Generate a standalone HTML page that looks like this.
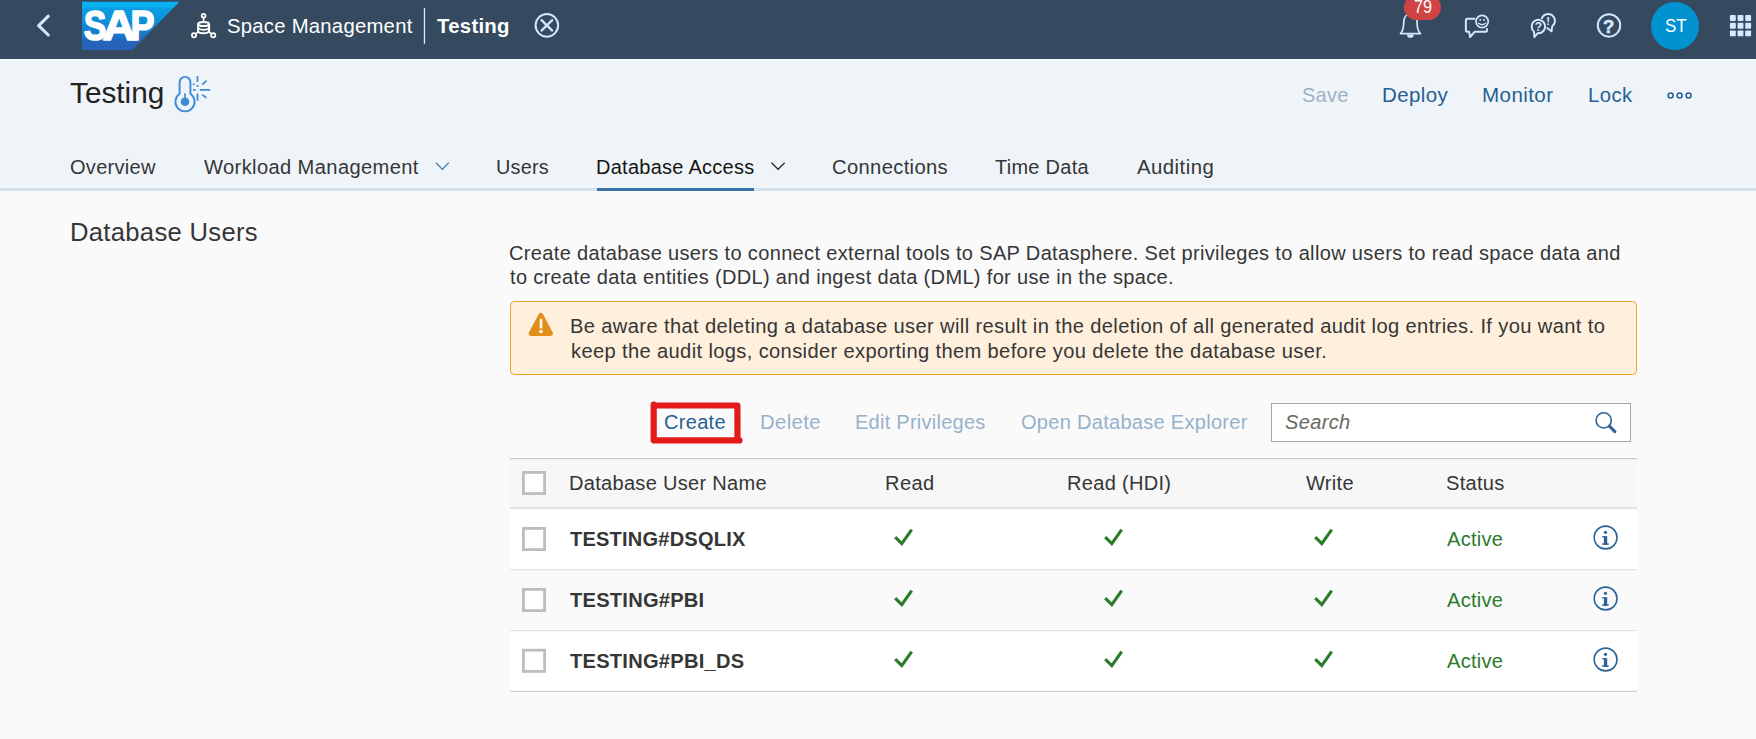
<!DOCTYPE html>
<html><head><meta charset="utf-8"><title>Space Management - Testing</title>
<style>
html,body{margin:0;padding:0;}
body{width:1756px;height:739px;overflow:hidden;background:#fafafa;position:relative;font-family:"Liberation Sans",sans-serif;}
.t{position:absolute;white-space:pre;transform-origin:0 0;font-family:"Liberation Sans",sans-serif;}
.b{position:absolute;box-sizing:border-box;}
#shell{left:0;top:0;width:1756px;height:59px;background:#354a5f;}
#phead{left:0;top:59px;width:1756px;height:129px;background:#eff4f9;}
#pline{left:0;top:188px;width:1756px;height:3px;background:#d3e0ee;}
#tabsel{left:597px;top:188px;width:157px;height:3px;background:#3873a7;}
#warn{left:510px;top:301px;width:1127px;height:74px;background:#fef0dc;border:1px solid #f2a13a;border-radius:4.5px;}
#srch{left:1271px;top:403px;width:360px;height:39px;background:#fff;border:1px solid #a9a69e;}
#thead{left:510px;top:458px;width:1127px;height:51px;background:#f7f7f7;}
.row{left:510px;width:1127px;background:#fff;}
#row1{top:509px;height:61px;}
#row2{top:570px;height:61px;background:#fafafa;}
#row3{top:631px;height:61px;}
.cb{left:522px;width:24px;height:24px;background:#fff;border:2.8px solid #bebdb7;}
svg{position:absolute;left:0;top:0;}
</style></head>
<body>
<div class="b" id="shell"></div>
<div class="b" id="phead"></div>
<div class="b" id="pline"></div>
<div class="b" id="tabsel"></div>
<div class="b" id="warn"></div>
<div class="b" id="srch"></div>
<div class="b" id="thead"></div>
<div class="b row" id="row1"></div>
<div class="b row" id="row2"></div>
<div class="b row" id="row3"></div>
<svg width="1756" height="739" viewBox="0 0 1756 739">
<defs>
<linearGradient id="sapg" x1="0" y1="0" x2="0" y2="1"><stop offset="0" stop-color="#0ab2f3"/><stop offset="0.115" stop-color="#08adf0"/><stop offset="0.125" stop-color="#0a9fe4"/><stop offset="0.5" stop-color="#1288d6"/><stop offset="0.76" stop-color="#1d6fc5"/><stop offset="0.8" stop-color="#2465ba"/><stop offset="1" stop-color="#2562b7"/></linearGradient>
</defs>
<!-- table lines -->
<rect x="510" y="458" width="1127" height="1.2" fill="#c8c8c8"/>
<rect x="510" y="507.2" width="1127" height="1.8" fill="#e0e0e0"/>
<rect x="510" y="569" width="1127" height="1.2" fill="#e3e3e3"/>
<rect x="510" y="630" width="1127" height="1.2" fill="#e3e3e3"/>
<rect x="510" y="690.8" width="1127" height="1.2" fill="#cfcfcf"/>
<!-- checkboxes -->
<g fill="#fff" stroke="#bebdb7" stroke-width="2.8"><rect x="523.4" y="472.4" width="21.2" height="21.2"/><rect x="523.4" y="528.4" width="21.2" height="21.2"/><rect x="523.4" y="589.4" width="21.2" height="21.2"/><rect x="523.4" y="650.2" width="21.2" height="21.2"/></g>
<rect x="0" y="59" width="1756" height="1" fill="#f8fbfe"/>
<!-- back arrow -->
<path d="M48.3,16.2 L38.6,25.6 L48.3,35" fill="none" stroke="#d1e8ff" stroke-width="3" stroke-linecap="round" stroke-linejoin="round"/>
<!-- SAP logo -->
<path d="M82,1.8 H179.5 L132.2,50.1 H82 Z" fill="url(#sapg)"/>
<g font-family="Liberation Sans" font-weight="bold" font-size="43" fill="#fff" stroke="#fff" stroke-width="1.6" stroke-linejoin="round">
<text x="83.8" y="40.1" textLength="22.6" lengthAdjust="spacingAndGlyphs">S</text>
<text x="102.6" y="40.1" textLength="33" lengthAdjust="spacingAndGlyphs">A</text>
<text x="130.4" y="40.1" textLength="24" lengthAdjust="spacingAndGlyphs">P</text>
</g>
<!-- space icon -->
<g fill="none" stroke="#ffffff" stroke-width="2">
<circle cx="203.6" cy="15.7" r="1.9" stroke-width="1.7"/>
<path d="M203.6,17.8 V21.4" stroke-width="1.6"/>
<ellipse cx="203.6" cy="24" rx="5.5" ry="2.1"/>
<path d="M198.1,24 V31 A5.5,2.2 0 0 0 209.1,31 V24"/>
<path d="M198.1,27.6 A5.5,2.2 0 0 0 209.1,27.6" stroke-width="1.7"/>
<path d="M198.3,31.8 L196,33.6 M208.9,31.8 L211.2,33.6" stroke-width="1.6"/>
<circle cx="194" cy="35.2" r="2.1" stroke-width="1.8"/>
<circle cx="213.2" cy="35.2" r="2.1" stroke-width="1.8"/>
</g>
<!-- divider -->
<rect x="423.8" y="8" width="1.3" height="35.8" fill="#d9e9f8"/>
<!-- close -->
<g fill="none" stroke="#d1e8ff" stroke-width="2"><circle cx="546.85" cy="25.35" r="11.3"/><path d="M541.5,20.1 L552.2,30.6 M552.2,20.1 L541.5,30.6" stroke-width="2.2" stroke-linecap="round"/></g>
<!-- bell -->
<g fill="none" stroke="#d1e8ff" stroke-width="1.7" stroke-linejoin="round" transform="translate(-0.6,-0.2)">
<path d="M1400.4,33.9 H1421.8 M1401.3,33.6 C1404.3,30 1404.3,27 1404.3,23 C1404.3,17.5 1407,14 1411,14 C1415,14 1417.7,17.5 1417.7,23 C1417.7,27 1417.7,30 1420.7,33.6"/>
<path d="M1407.6,34.6 A3.4,3.4 0 0 0 1414.4,34.6 Z" fill="#d1e8ff" stroke="none"/>
</g>
<!-- badge -->
<rect x="1403.9" y="-5.4" width="37.1" height="25.4" rx="12.7" fill="#d04345"/>
<!-- chat smiley -->
<g fill="none" stroke="#d1e8ff" stroke-width="2" stroke-linejoin="round">
<path d="M1475.2,18.8 H1467.4 Q1465.9,18.8 1465.9,20.3 V30.3 Q1465.9,31.8 1467.4,31.8 H1469.2 L1470.1,37 L1474.6,31.8 H1485.5 Q1487,31.8 1487,30.3 V28.2"/>
<circle cx="1482.1" cy="21.5" r="6.1" stroke-width="1.7"/>
<path d="M1478.1,23.1 Q1482.1,26.4 1486.1,23.1" stroke-width="1.3"/>
<rect x="1479.4" y="19" width="1.7" height="1.7" fill="#d1e8ff" stroke="none"/><rect x="1483.1" y="19" width="1.7" height="1.7" fill="#d1e8ff" stroke="none"/>
</g>
<!-- discussion -->
<g fill="none" stroke="#d1e8ff" stroke-width="1.9" stroke-linejoin="round">
<path d="M1541.6,19 A6.8,6.8 0 1 1 1552.1,26.4 L1551.6,31.4 L1546.7,27.5"/>
<path d="M1537.7,33.2 A6.7,6.7 0 1 0 1534,31.6 L1534.4,37.2 Z"/>
<text x="1538.4" y="30.6" text-anchor="middle" font-family="Liberation Sans" font-weight="bold" font-size="12" fill="#d1e8ff" stroke="none">?</text>
<text x="1548.2" y="24.8" text-anchor="middle" font-family="Liberation Sans" font-weight="bold" font-size="11.5" fill="#d1e8ff" stroke="none">!</text>
</g>
<!-- help -->
<g fill="none" stroke="#d1e8ff" stroke-width="2"><circle cx="1609" cy="25.45" r="11.2"/></g>
<text x="1608.7" y="32.7" text-anchor="middle" font-family="Liberation Sans" font-weight="bold" font-size="18.6" fill="#d1e8ff" stroke="#d1e8ff" stroke-width="0.5">?</text>
<!-- avatar -->
<circle cx="1675" cy="26" r="24" fill="#0092d1"/>
<!-- grid -->
<g fill="#d3e9ff"><rect x="1729.90" y="15.10" width="5.9" height="5.9" rx="0.9"/><rect x="1737.55" y="15.10" width="5.9" height="5.9" rx="0.9"/><rect x="1745.20" y="15.10" width="5.9" height="5.9" rx="0.9"/><rect x="1729.90" y="22.75" width="5.9" height="5.9" rx="0.9"/><rect x="1737.55" y="22.75" width="5.9" height="5.9" rx="0.9"/><rect x="1745.20" y="22.75" width="5.9" height="5.9" rx="0.9"/><rect x="1729.90" y="30.40" width="5.9" height="5.9" rx="0.9"/><rect x="1737.55" y="30.40" width="5.9" height="5.9" rx="0.9"/><rect x="1745.20" y="30.40" width="5.9" height="5.9" rx="0.9"/></g>
<!-- thermometer -->
<g fill="none" stroke="#3e8bd8" stroke-width="1.7" stroke-linecap="butt">
<path d="M179.6,93.8 V82.3 A5.4,5.4 0 0 1 190.4,82.3 V93.8 A9.6,9.6 0 1 1 179.6,93.8 Z" stroke-width="1.9"/>
<circle cx="185" cy="101.8" r="4.3" fill="#3e8bd8" stroke="none"/>
<path d="M185,93.2 V100"/>
<path d="M197.5,76 V82 M197.5,93.6 V100.8 M199.8,89.8 H210.2 M193,89.8 H195.6 M202.2,84.6 L206.6,80.6 M202.2,94.6 L206.4,97.8 M197.5,85 V87 M193.2,83.6 L194.4,84.8"/>
</g>
<!-- overflow -->
<g fill="none" stroke="#22609a" stroke-width="1.5"><circle cx="1670.6" cy="95.5" r="2.5"/><circle cx="1679.6" cy="95.5" r="2.5"/><circle cx="1688.6" cy="95.5" r="2.5"/></g>
<!-- tab chevrons -->
<g fill="none" stroke-width="1.25"><path d="M435.9,162.7 L442.35,169.3 L448.8,162.7" stroke="#4a82ba"/><path d="M771.5,162.7 L778.1,169.3 L784.7,162.7" stroke="#2c2c2c"/></g>
<!-- warning icon -->
<path d="M540.85,315.4 L550.4,333.4 H531.2 Z" fill="#df8f1b" stroke="#df8f1b" stroke-width="5" stroke-linejoin="round"/>
<rect x="539.65" y="318.8" width="2.7" height="9.8" rx="0.9" fill="#fff4e0"/><ellipse cx="540.95" cy="331.5" rx="2" ry="1.7" fill="#fff4e0"/>
<!-- red annotation -->
<path d="M653.7,404.7 L653.7,440.3 L739.5,440.4 M653.7,405.3 L737.4,405.5 L737.5,440.3" fill="none" stroke="#e31b1b" stroke-width="6.2" stroke-linejoin="round" stroke-linecap="round"/>
<!-- search icon -->
<g fill="none" stroke="#2b6398"><circle cx="1603.7" cy="420.4" r="7.6" stroke-width="1.6"/><path d="M1609.4,426.1 L1614.9,431.6" stroke-width="3" stroke-linecap="round"/></g>
<!-- checks -->
<g transform="translate(903.6,538.8)"><path d="M-8.4,-1.7 L-1.8,4.9 L8.1,-9.1" fill="none" stroke="#2a7b2a" stroke-width="3.1" stroke-linejoin="miter"/></g><g transform="translate(1113.6,538.8)"><path d="M-8.4,-1.7 L-1.8,4.9 L8.1,-9.1" fill="none" stroke="#2a7b2a" stroke-width="3.1" stroke-linejoin="miter"/></g><g transform="translate(1323.6,538.8)"><path d="M-8.4,-1.7 L-1.8,4.9 L8.1,-9.1" fill="none" stroke="#2a7b2a" stroke-width="3.1" stroke-linejoin="miter"/></g>
<g transform="translate(903.6,599.8)"><path d="M-8.4,-1.7 L-1.8,4.9 L8.1,-9.1" fill="none" stroke="#2a7b2a" stroke-width="3.1" stroke-linejoin="miter"/></g><g transform="translate(1113.6,599.8)"><path d="M-8.4,-1.7 L-1.8,4.9 L8.1,-9.1" fill="none" stroke="#2a7b2a" stroke-width="3.1" stroke-linejoin="miter"/></g><g transform="translate(1323.6,599.8)"><path d="M-8.4,-1.7 L-1.8,4.9 L8.1,-9.1" fill="none" stroke="#2a7b2a" stroke-width="3.1" stroke-linejoin="miter"/></g>
<g transform="translate(903.6,660.8)"><path d="M-8.4,-1.7 L-1.8,4.9 L8.1,-9.1" fill="none" stroke="#2a7b2a" stroke-width="3.1" stroke-linejoin="miter"/></g><g transform="translate(1113.6,660.8)"><path d="M-8.4,-1.7 L-1.8,4.9 L8.1,-9.1" fill="none" stroke="#2a7b2a" stroke-width="3.1" stroke-linejoin="miter"/></g><g transform="translate(1323.6,660.8)"><path d="M-8.4,-1.7 L-1.8,4.9 L8.1,-9.1" fill="none" stroke="#2a7b2a" stroke-width="3.1" stroke-linejoin="miter"/></g>
<!-- info -->
<g transform="translate(1605.6,537.5)"><circle cx="0" cy="0" r="11.4" fill="none" stroke="#2b6398" stroke-width="1.6"/><g fill="#2b6398"><circle cx="-0.1" cy="-5.2" r="1.6"/><rect x="-1.7" y="-1.4" width="3.3" height="8.7"/><rect x="-3.4" y="-1.4" width="2" height="1.3"/><rect x="-3.4" y="5.8" width="6.5" height="1.5"/></g></g><g transform="translate(1605.6,598.5)"><circle cx="0" cy="0" r="11.4" fill="none" stroke="#2b6398" stroke-width="1.6"/><g fill="#2b6398"><circle cx="-0.1" cy="-5.2" r="1.6"/><rect x="-1.7" y="-1.4" width="3.3" height="8.7"/><rect x="-3.4" y="-1.4" width="2" height="1.3"/><rect x="-3.4" y="5.8" width="6.5" height="1.5"/></g></g><g transform="translate(1605.6,659.5)"><circle cx="0" cy="0" r="11.4" fill="none" stroke="#2b6398" stroke-width="1.6"/><g fill="#2b6398"><circle cx="-0.1" cy="-5.2" r="1.6"/><rect x="-1.7" y="-1.4" width="3.3" height="8.7"/><rect x="-3.4" y="-1.4" width="2" height="1.3"/><rect x="-3.4" y="5.8" width="6.5" height="1.5"/></g></g>
</svg>

<span class="t" id="t_sm" style="left:226.93px;top:17.00px;font-size:19.9px;line-height:19.9px;color:#ffffff;transform:scaleX(1.0208);letter-spacing:0.235px;">Space Management</span>
<span class="t" id="t_tst" style="left:437.01px;top:17.00px;font-size:19.9px;line-height:19.9px;color:#ffffff;transform:scaleX(1.0228);font-weight:700;letter-spacing:0.274px;">Testing</span>
<span class="t" id="t_79" style="left:1414.12px;top:-1.00px;font-size:17.6px;line-height:17.6px;color:#ffffff;transform:scaleX(0.9252);">79</span>
<span class="t" id="t_st" style="left:1664.90px;top:18.00px;font-size:17.6px;line-height:17.6px;color:#ffffff;transform:scaleX(0.9632);">ST</span>
<span class="t" id="t_title" style="left:69.65px;top:78.00px;font-size:30.3px;line-height:30.3px;color:#222222;transform:scaleX(0.9825);">Testing</span>
<span class="t" id="t_save" style="left:1301.56px;top:86.00px;font-size:19.8px;line-height:19.8px;color:#9db2c7;transform:scaleX(1.0139);letter-spacing:0.198px;">Save</span>
<span class="t" id="t_deploy" style="left:1381.98px;top:86.00px;font-size:19.8px;line-height:19.8px;color:#265f94;transform:scaleX(1.0374);letter-spacing:0.385px;">Deploy</span>
<span class="t" id="t_monitor" style="left:1482.18px;top:86.00px;font-size:19.8px;line-height:19.8px;color:#265f94;transform:scaleX(1.0400);letter-spacing:0.394px;">Monitor</span>
<span class="t" id="t_lock" style="left:1588.21px;top:86.00px;font-size:19.8px;line-height:19.8px;color:#265f94;transform:scaleX(1.0263);letter-spacing:0.390px;">Lock</span>
<span class="t" id="t_ov" style="left:69.76px;top:158.00px;font-size:19.5px;line-height:19.5px;color:#363636;transform:scaleX(1.0271);letter-spacing:0.276px;">Overview</span>
<span class="t" id="t_wm" style="left:204.01px;top:158.00px;font-size:19.5px;line-height:19.5px;color:#363636;transform:scaleX(1.0322);letter-spacing:0.362px;">Workload Management</span>
<span class="t" id="t_us" style="left:496.16px;top:158.00px;font-size:19.5px;line-height:19.5px;color:#363636;transform:scaleX(1.0166);letter-spacing:0.230px;">Users</span>
<span class="t" id="t_da" style="left:596.25px;top:158.00px;font-size:19.5px;line-height:19.5px;color:#141414;transform:scaleX(1.0243);letter-spacing:0.273px;">Database Access</span>
<span class="t" id="t_co" style="left:831.87px;top:158.00px;font-size:19.5px;line-height:19.5px;color:#363636;transform:scaleX(1.0349);letter-spacing:0.337px;">Connections</span>
<span class="t" id="t_td" style="left:994.90px;top:158.00px;font-size:19.5px;line-height:19.5px;color:#363636;transform:scaleX(1.0234);letter-spacing:0.279px;">Time Data</span>
<span class="t" id="t_au" style="left:1136.98px;top:158.00px;font-size:19.5px;line-height:19.5px;color:#363636;transform:scaleX(1.0439);letter-spacing:0.441px;">Auditing</span>
<span class="t" id="t_dbu" style="left:69.68px;top:220.00px;font-size:25.0px;line-height:25.0px;color:#363636;transform:scaleX(1.0240);letter-spacing:0.305px;">Database Users</span>
<span class="t" id="t_p1" style="left:509.40px;top:244.00px;font-size:19.3px;line-height:19.3px;color:#363636;transform:scaleX(1.0386);letter-spacing:0.324px;">Create database users to connect external tools to SAP Datasphere. Set privileges to allow users to read space data and</span>
<span class="t" id="t_p2" style="left:510.34px;top:268.00px;font-size:19.3px;line-height:19.3px;color:#363636;transform:scaleX(1.0387);letter-spacing:0.315px;">to create data entities (DDL) and ingest data (DML) for use in the space.</span>
<span class="t" id="t_w1" style="left:570.33px;top:317.00px;font-size:19.3px;line-height:19.3px;color:#363636;transform:scaleX(1.0443);letter-spacing:0.347px;">Be aware that deleting a database user will result in the deletion of all generated audit log entries. If you want to</span>
<span class="t" id="t_w2" style="left:570.60px;top:342.00px;font-size:19.3px;line-height:19.3px;color:#363636;transform:scaleX(1.0428);letter-spacing:0.350px;">keep the audit logs, consider exporting them before you delete the database user.</span>
<span class="t" id="t_create" style="left:663.72px;top:413.00px;font-size:19.5px;line-height:19.5px;color:#265f94;transform:scaleX(1.0254);letter-spacing:0.297px;">Create</span>
<span class="t" id="t_delete" style="left:760.23px;top:413.00px;font-size:19.5px;line-height:19.5px;color:#97b1cb;transform:scaleX(1.0388);letter-spacing:0.382px;">Delete</span>
<span class="t" id="t_edit" style="left:855.35px;top:413.00px;font-size:19.5px;line-height:19.5px;color:#97b1cb;transform:scaleX(1.0283);letter-spacing:0.230px;">Edit Privileges</span>
<span class="t" id="t_open" style="left:1020.56px;top:413.00px;font-size:19.5px;line-height:19.5px;color:#97b1cb;transform:scaleX(1.0281);letter-spacing:0.267px;">Open Database Explorer</span>
<span class="t" id="t_search" style="left:1284.62px;top:413.00px;font-size:19.5px;line-height:19.5px;color:#6b6862;transform:scaleX(1.0288);font-style:italic;letter-spacing:0.324px;">Search</span>
<span class="t" id="t_h1" style="left:569.25px;top:474.00px;font-size:19.5px;line-height:19.5px;color:#363636;transform:scaleX(1.0270);letter-spacing:0.288px;">Database User Name</span>
<span class="t" id="t_h2" style="left:884.87px;top:474.00px;font-size:19.5px;line-height:19.5px;color:#363636;transform:scaleX(1.0279);letter-spacing:0.425px;">Read</span>
<span class="t" id="t_h3" style="left:1067.14px;top:474.00px;font-size:19.5px;line-height:19.5px;color:#363636;transform:scaleX(1.0276);letter-spacing:0.284px;">Read (HDI)</span>
<span class="t" id="t_h4" style="left:1305.81px;top:474.00px;font-size:19.5px;line-height:19.5px;color:#363636;transform:scaleX(1.0290);letter-spacing:0.290px;">Write</span>
<span class="t" id="t_h5" style="left:1446.14px;top:474.00px;font-size:19.5px;line-height:19.5px;color:#363636;transform:scaleX(1.0291);letter-spacing:0.247px;">Status</span>
<span class="t" id="t_r1" style="left:569.90px;top:530.00px;font-size:19.7px;line-height:19.7px;color:#363636;transform:scaleX(1.0178);font-weight:700;letter-spacing:0.210px;">TESTING#DSQLIX</span>
<span class="t" id="t_r2" style="left:569.90px;top:591.00px;font-size:19.7px;line-height:19.7px;color:#363636;transform:scaleX(1.0204);font-weight:700;letter-spacing:0.240px;">TESTING#PBI</span>
<span class="t" id="t_r3" style="left:569.90px;top:652.00px;font-size:19.7px;line-height:19.7px;color:#363636;transform:scaleX(1.0208);font-weight:700;letter-spacing:0.248px;">TESTING#PBI_DS</span>
<span class="t" id="t_a1" style="left:1446.78px;top:530.00px;font-size:19.5px;line-height:19.5px;color:#2b7c2b;transform:scaleX(1.0282);letter-spacing:0.274px;">Active</span>
<span class="t" id="t_a2" style="left:1446.78px;top:591.00px;font-size:19.5px;line-height:19.5px;color:#2b7c2b;transform:scaleX(1.0282);letter-spacing:0.274px;">Active</span>
<span class="t" id="t_a3" style="left:1446.78px;top:652.00px;font-size:19.5px;line-height:19.5px;color:#2b7c2b;transform:scaleX(1.0282);letter-spacing:0.274px;">Active</span>
</body></html>
